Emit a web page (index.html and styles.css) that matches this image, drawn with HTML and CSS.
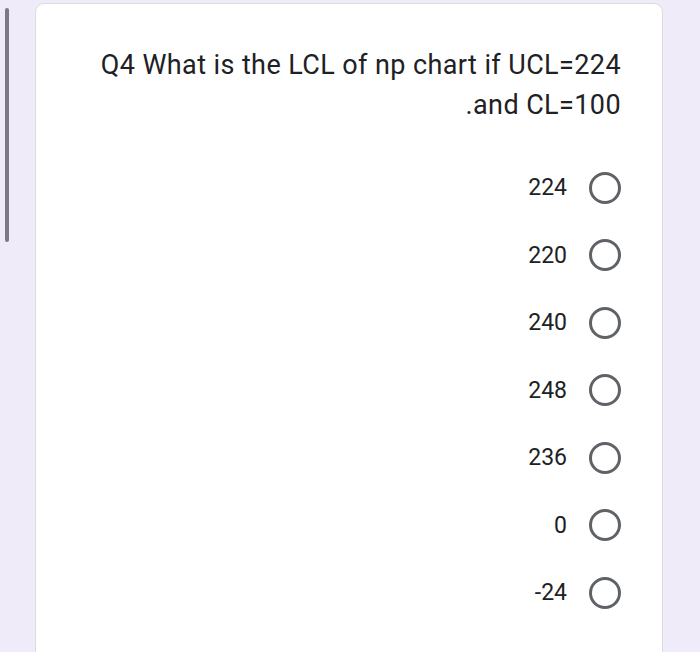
FILE: index.html
```html
<!DOCTYPE html>
<html lang="en">
<head>
<meta charset="utf-8">
<link rel="stylesheet" href="styles.css">
</head>
<body>
<div class="page">
  <div class="rail"><div class="scroll-thumb"></div></div>
  <div class="card">
    <div class="question">Q4 What is the LCL of np chart if UCL=224<br>.and CL=100</div>
    <div class="options">
      <div class="option"><span class="label">224</span><span class="radio"></span></div>
      <div class="option"><span class="label">220</span><span class="radio"></span></div>
      <div class="option"><span class="label">240</span><span class="radio"></span></div>
      <div class="option"><span class="label">248</span><span class="radio"></span></div>
      <div class="option"><span class="label">236</span><span class="radio"></span></div>
      <div class="option"><span class="label">0</span><span class="radio"></span></div>
      <div class="option"><span class="label">-24</span><span class="radio"></span></div>
    </div>
  </div>
</div>
</body>
</html>
```
FILE: styles.css
```css
html, body {
  margin: 0;
  padding: 0;
  background: #efebf8;
}
.page {
  display: flex;
  align-items: flex-start;
  height: 652px;
  overflow: hidden;
  font-family: Roboto, "Liberation Sans", sans-serif;
  color: #202124;
}
.rail {
  width: 35px;
  padding: 8px 0 0 5px;
  box-sizing: border-box;
}
.scroll-thumb {
  width: 4px;
  height: 234px;
  background: #7c7985;
  border-radius: 2px;
}
.card {
  margin-top: 3px;
  width: 628px;
  height: 660px;
  box-sizing: border-box;
  background: #fff;
  border: 1px solid #dadce0;
  border-radius: 9px;
  padding: 41px 41px 0 40px;
}
.question {
  font-size: 27px;
  line-height: 40px;
  text-align: right;
  letter-spacing: 0.4px;
}
.options {
  margin-top: 29px;
  display: flex;
  flex-direction: column;
  align-items: flex-end;
}
.option {
  height: 67.5px;
  display: flex;
  align-items: center;
  gap: 22px;
}
.label {
  font-size: 23px;
}
.radio {
  width: 32px;
  height: 32px;
  box-sizing: border-box;
  border: 3px solid #5f6368;
  border-radius: 50%;
}
```
